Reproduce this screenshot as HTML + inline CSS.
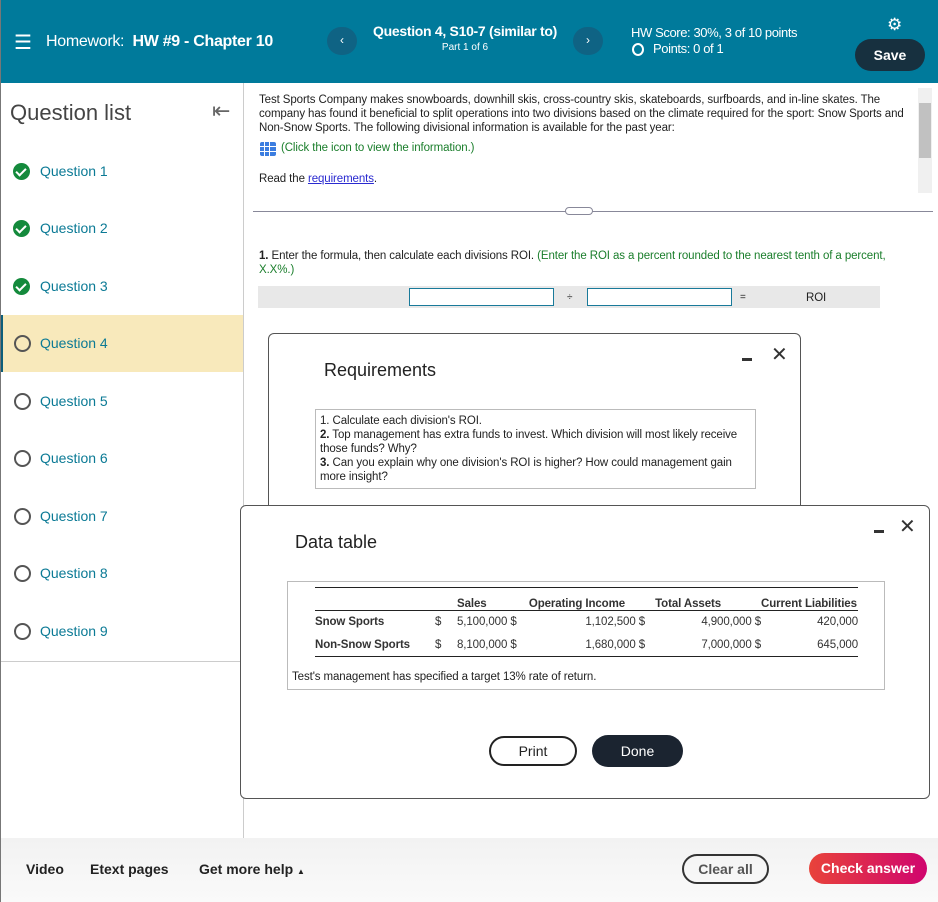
<!DOCTYPE html>
<html><head><style>
*{box-sizing:border-box;margin:0;padding:0}
body{width:938px;height:902px;overflow:hidden;font-family:"Liberation Sans",Arial,sans-serif;background:#fff;position:relative}
.abs{position:absolute}
#hdr{left:0;top:0;width:938px;height:83px;background:#007a9b;color:#fff}
#side{left:0;top:83px;width:244px;height:755px;border-right:1px solid #ccc}
.q{position:absolute;left:0;width:243px;height:57px;font-size:14px;color:#0b7a95}
.q span.t{position:absolute;left:40px;top:20px}
.ck{position:absolute;left:13px;top:20px;width:17px;height:17px;border-radius:50%;background:#148a3c}
.ck:after{content:"";position:absolute;left:5px;top:3px;width:4px;height:8px;border:solid #fff;border-width:0 2px 2px 0;transform:rotate(45deg)}
.oc{position:absolute;left:14px;top:20px;width:17px;height:17px;border-radius:50%;border:2px solid #555}
.txt{font-size:11.5px;color:#222;line-height:14px;letter-spacing:-0.1px}
.green{color:#1a7e2b}
#foot{left:0;top:838px;width:938px;height:64px;background:linear-gradient(#f2f2f2,#fafafa)}
.btn{position:absolute;border-radius:16px;font-size:14px;font-weight:bold;text-align:center}
.dlg{background:#fff;border:1px solid #555;border-radius:6px}
td{font-size:11.5px;padding:0;height:23px;color:#333;white-space:nowrap}
</style></head><body>
<div id="hdr" class="abs">
 <div class="abs" style="left:14px;top:30px;font-size:20px">☰</div>
 <div class="abs" style="left:46px;top:33px;font-size:16px;letter-spacing:-0.3px">Homework:&nbsp; <b>HW #9 - Chapter 10</b></div>
 <div class="abs" style="left:327px;top:27px;width:30px;height:28px;border-radius:14px;background:#0f6384;text-align:center;line-height:27px;font-size:12px">‹</div>
 <div class="abs" style="left:360px;top:23px;width:210px;text-align:center;font-size:14px;font-weight:bold;letter-spacing:-0.3px">Question 4, S10-7 (similar to)</div>
 <div class="abs" style="left:360px;top:42px;width:210px;text-align:center;font-size:10px">Part 1 of 6</div>
 <div class="abs" style="left:573px;top:27px;width:30px;height:28px;border-radius:14px;background:#0f6384;text-align:center;line-height:27px;font-size:12px">›</div>
 <div class="abs" style="left:631px;top:25px;font-size:13px;letter-spacing:-0.4px">HW Score: 30%, 3 of 10 points</div>
 <div class="abs" style="left:632px;top:43px;width:12px;height:13px;border:2px solid #fff;border-radius:50%"></div>
 <div class="abs" style="left:653px;top:41px;font-size:13px;letter-spacing:-0.4px">Points: 0 of 1</div>
 <div class="abs" style="left:887px;top:15px;font-size:17px">⚙</div>
 <div class="abs" style="left:855px;top:39px;width:70px;height:32px;border-radius:16px;background:#17303f;text-align:center;line-height:32px;font-weight:bold;font-size:14px">Save</div>
</div>
<div id="side" class="abs">
 <div class="abs" style="left:10px;top:17px;font-size:22px;color:#444">Question list</div>
 <div class="abs" style="left:212px;top:15px;font-size:22px;color:#666">⇤</div>
 <div class="q" style="top:60px"><div class="ck"></div><span class="t">Question 1</span></div>
 <div class="q" style="top:117px"><div class="ck"></div><span class="t">Question 2</span></div>
 <div class="q" style="top:175px"><div class="ck"></div><span class="t">Question 3</span></div>
 <div class="q" style="top:232px;background:#f8e9bb;border-left:3px solid #0e5e7a"><div class="oc" style="left:11px"></div><span class="t" style="left:37px">Question 4</span></div>
 <div class="q" style="top:290px"><div class="oc"></div><span class="t">Question 5</span></div>
 <div class="q" style="top:347px"><div class="oc"></div><span class="t">Question 6</span></div>
 <div class="q" style="top:405px"><div class="oc"></div><span class="t">Question 7</span></div>
 <div class="q" style="top:462px"><div class="oc"></div><span class="t">Question 8</span></div>
 <div class="q" style="top:520px"><div class="oc"></div><span class="t">Question 9</span></div>
 <div class="abs" style="left:0;top:578px;width:243px;border-top:1px solid #ccc"></div>
</div>
<div class="abs txt" style="left:259px;top:93px;width:652px">Test Sports Company makes snowboards, downhill skis, cross-country skis, skateboards, surfboards, and in-line skates. The company has found it beneficial to split operations into two divisions based on the climate required for the sport: Snow Sports and Non-Snow Sports. The following divisional information is available for the past year:</div>
<div class="abs" style="left:260px;top:142px;width:16px;height:14px;background:#3b7de0;border-radius:2px;background-image:linear-gradient(90deg,transparent 4px,#fff 4px,#fff 5px,transparent 5px,transparent 9px,#fff 9px,#fff 10px,transparent 10px),linear-gradient(transparent 4px,#fff 4px,#fff 5px,transparent 5px,transparent 9px,#fff 9px,#fff 10px,transparent 10px)"></div>
<div class="abs txt green" style="left:281px;top:141px">(Click the icon to view the information.)</div>
<div class="abs txt" style="left:259px;top:172px">Read the <u style="color:#2a2ad0">requirements</u>.</div>
<div class="abs" style="left:918px;top:88px;width:14px;height:105px;background:#f0f0f0"><div style="margin:15px 1px;height:55px;background:#c1c1c1"></div></div>
<div class="abs" style="left:253px;top:211px;width:680px;border-top:1px solid #889"></div>
<div class="abs" style="left:565px;top:207px;width:28px;height:8px;border:1px solid #889;border-radius:4px;background:#fff"></div>
<div class="abs txt" style="left:259px;top:249px;width:652px"><b>1.</b> Enter the formula, then calculate each divisions ROI. <span class="green">(Enter the ROI as a percent rounded to the nearest tenth of a percent, X.X%.)</span></div>
<div class="abs" style="left:258px;top:286px;width:622px;height:22px;background:#e8e8e8"></div>
<div class="abs" style="left:409px;top:288px;width:145px;height:18px;border:1px solid #197a9a;background:#fff"></div>
<div class="abs txt" style="left:567px;top:291px;font-size:10px">÷</div>
<div class="abs" style="left:587px;top:288px;width:145px;height:18px;border:1px solid #197a9a;background:#fff"></div>
<div class="abs txt" style="left:740px;top:291px;font-size:10px">=</div>
<div class="abs txt" style="left:806px;top:291px">ROI</div>

<div class="abs dlg" style="left:268px;top:333px;width:533px;height:190px">
 <div class="abs" style="left:55px;top:26px;font-size:18px;color:#222">Requirements</div>
 <div class="abs" style="left:473px;top:24px;width:10px;height:3px;background:#333"></div>
 <div class="abs" style="left:502px;top:8px;font-size:20px;color:#333">✕</div>
 <div class="abs txt" style="left:46px;top:75px;width:441px;border:1px solid #bbb;padding:4px">1. Calculate each division's ROI.<br><b>2.</b> Top management has extra funds to invest. Which division will most likely receive those funds? Why?<br><b>3.</b> Can you explain why one division's ROI is higher? How could management gain more insight?</div>
</div>
<div class="abs dlg" style="left:240px;top:505px;width:690px;height:294px">
 <div class="abs" style="left:54px;top:26px;font-size:18px;color:#222">Data table</div>
 <div class="abs" style="left:633px;top:24px;width:10px;height:3px;background:#333"></div>
 <div class="abs" style="left:658px;top:8px;font-size:20px;color:#333">✕</div>
 <div class="abs" style="left:46px;top:75px;width:598px;height:109px;border:1px solid #bbb">
  <table class="abs" style="left:27px;top:5px;width:543px;table-layout:fixed;border-collapse:collapse;border-top:1px solid #222;border-bottom:1px solid #222;letter-spacing:-0.1px">
   <colgroup><col style="width:120px"><col style="width:22px"><col style="width:68px"><col style="width:32px"><col style="width:88px"><col style="width:36px"><col style="width:80px"><col style="width:97px"></colgroup>
   <tr style="border-bottom:1px solid #222"><td style="padding-top:10px"></td><td></td><td style="padding-top:10px"><b>Sales</b></td><td colspan="2" style="padding-top:10px;text-align:right;font-weight:bold;padding-right:20px">Operating Income</td><td colspan="2" style="padding-top:10px;text-align:right;font-weight:bold;padding-right:40px">Total Assets</td><td style="text-align:right;padding-top:10px;font-weight:bold;padding-right:8px">Current Liabilities</td></tr>
   <tr><td><b>Snow Sports</b></td><td>$</td><td colspan="2">5,100,000 $</td><td style="text-align:right">1,102,500 $</td><td></td><td style="text-align:right">4,900,000 $</td><td style="text-align:right">420,000</td></tr>
   <tr><td><b>Non-Snow Sports</b></td><td>$</td><td colspan="2">8,100,000 $</td><td style="text-align:right">1,680,000 $</td><td></td><td style="text-align:right">7,000,000 $</td><td style="text-align:right">645,000</td></tr>
  </table>
  <div class="abs txt" style="left:4px;top:88px">Test's management has specified a target 13% rate of return.</div>
 </div>
 <div class="btn" style="left:248px;top:230px;width:88px;height:30px;border:2px solid #222;font-weight:normal;line-height:26px;color:#222">Print</div>
 <div class="btn" style="left:351px;top:229px;width:91px;height:32px;background:#1b2430;color:#fff;font-weight:normal;line-height:32px">Done</div>
</div>

<div id="foot" class="abs">
 <div class="abs" style="left:26px;top:23px;font-size:14px;font-weight:bold;color:#222">Video</div>
 <div class="abs" style="left:90px;top:23px;font-size:14px;font-weight:bold;color:#222">Etext pages</div>
 <div class="abs" style="left:199px;top:23px;font-size:14px;font-weight:bold;color:#222">Get more help <span style="font-size:8px">▲</span></div>
 <div class="btn" style="left:682px;top:16px;width:87px;height:30px;border:2px solid #333;line-height:26px;color:#555">Clear all</div>
 <div class="btn" style="left:809px;top:15px;width:118px;height:31px;background:linear-gradient(90deg,#e8433a,#d0056e);color:#fff;line-height:31px">Check answer</div>
</div>
<div class="abs" style="left:0;top:0;width:1px;height:902px;background:#777"></div>
</body></html>
